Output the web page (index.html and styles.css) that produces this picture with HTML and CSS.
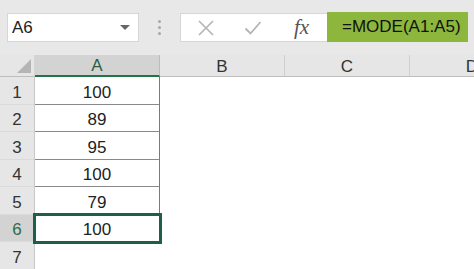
FILE: index.html
```html
<html>
  <head>
    <title>MODE</title>
    <link rel="stylesheet" href="styles.css">
  </head>
  <body>
    <div class="toolbar">
      <div class="namebox">
        <span>A6</span>
        <span class="drop"></span>
      </div>
      <div class="dots"><i></i><i></i><i></i></div>
      <div class="fbar">
        <svg class="ico" width="18" height="18" viewBox="0 0 18 18"><path d="M2 2 L16 16 M16 2 L2 16" stroke="#b4b4b4" stroke-width="1.6" fill="none"/></svg>
        <svg class="ico" width="18" height="18" viewBox="0 0 18 18"><path d="M1.5 9.5 L6.5 14.5 L16.5 3" stroke="#b4b4b4" stroke-width="1.8" fill="none"/></svg>
        <span class="fx">fx</span>
      </div>
      <div class="formula">=MODE(A1:A5)</div>
    </div>

    <div class="sheet">
      <div class="hd corner"><span class="tri"></span></div>
      <div class="hd col sel">A</div>
      <div class="hd col">B</div>
      <div class="hd col">C</div>
      <div class="hd col">D</div>

      <div class="rh">1</div><div class="cell a">100</div><div class="cell"></div><div class="cell"></div><div class="cell"></div>
      <div class="rh">2</div><div class="cell a">89</div><div class="cell"></div><div class="cell"></div><div class="cell"></div>
      <div class="rh">3</div><div class="cell a">95</div><div class="cell"></div><div class="cell"></div><div class="cell"></div>
      <div class="rh">4</div><div class="cell a">100</div><div class="cell"></div><div class="cell"></div><div class="cell"></div>
      <div class="rh">5</div><div class="cell a">79</div><div class="cell"></div><div class="cell"></div><div class="cell"></div>
      <div class="rh sel">6</div><div class="cell a active">100</div><div class="cell"></div><div class="cell"></div><div class="cell"></div>
      <div class="rh">7</div><div class="cell"></div><div class="cell"></div><div class="cell"></div><div class="cell"></div>
    </div>
  </body>
</html>
```

FILE: styles.css
```css
body {
  margin: 0;
  background: #fff;
  font-family: "Liberation Sans", Arial, sans-serif;
  color: #222;
  overflow: hidden;
}

/* formula toolbar */
.toolbar {
  height: 55px;
  background: #e8e8e8;
  display: flex;
  align-items: flex-start;
  padding: 13px 0 0 7px;
  box-sizing: border-box;
}
.namebox {
  width: 132px;
  height: 29px;
  background: #fff;
  border: 1px solid #d6d6d6;
  box-sizing: border-box;
  display: flex;
  align-items: center;
  justify-content: space-between;
  padding: 0 8px 0 4px;
  font-size: 17px;
  color: #222;
}
.drop {
  width: 0;
  height: 0;
  border-left: 5px solid transparent;
  border-right: 5px solid transparent;
  border-top: 5px solid #666;
}
.dots {
  width: 41px;
  height: 29px;
  display: flex;
  flex-direction: column;
  align-items: center;
  justify-content: center;
  gap: 3px;
}
.dots i {
  width: 3px;
  height: 3px;
  border-radius: 50%;
  background: #a8a8a8;
}
.fbar {
  width: 147px;
  height: 29px;
  background: #fff;
  border: 1px solid #d6d6d6;
  border-right: 0;
  box-sizing: border-box;
  display: flex;
  align-items: center;
  padding-left: 16px;
  gap: 29px;
}
.fx {
  font-family: "Liberation Serif", serif;
  font-style: italic;
  font-size: 21px;
  color: #555;
  margin-left: 3px;
}
.formula {
  width: 141px;
  height: 30px;
  margin-top: -1px;
  background: #8cb63c;
  box-sizing: border-box;
  padding-left: 15px;
  display: flex;
  align-items: center;
  font-size: 17px;
  color: #111;
}

/* grid */
.sheet {
  display: grid;
  grid-template-columns: 35px 125px 125px 125px 125px;
  grid-template-rows: 22px repeat(7, 27.5px);
}
.hd {
  background: #e6e6e6;
  border-bottom: 1px solid #bdbdbd;
  display: flex;
  align-items: center;
  justify-content: center;
  padding-top: 2px;
  font-size: 17px;
  color: #333;
  box-sizing: border-box;
}
.corner {
  position: relative;
  border-right: 1px solid #d4d4d4;
}
.tri {
  position: absolute;
  right: 3px;
  bottom: 3px;
  width: 0;
  height: 0;
  border-left: 14px solid transparent;
  border-bottom: 14px solid #b5b5b5;
}
.col {
  border-right: 1px solid #cfcfcf;
}
.col.sel {
  background: #d3d3d3;
  color: #2b5e42;
  border-bottom: 2px solid #217346;
  border-right: 1px solid #bdbdbd;
}
.rh {
  background: #e6e6e6;
  border-right: 1px solid #c8c8c8;
  border-bottom: 1px solid #dadada;
  box-sizing: border-box;
  display: flex;
  align-items: center;
  justify-content: center;
  padding-top: 5px;
  font-size: 17px;
  color: #333;
}
.rh.sel {
  background: #d3d3d3;
  color: #2f6b47;
}
.cell {
  box-sizing: border-box;
  font-size: 17px;
  display: flex;
  align-items: center;
  justify-content: center;
}
.cell.a {
  border-right: 1px solid #7a7a7a;
  border-bottom: 1px solid #8a8a8a;
  padding-top: 5px;
}
.active {
  position: relative;
}
.active::after {
  content: "";
  position: absolute;
  left: -2px;
  top: -2px;
  right: -3px;
  bottom: -3px;
  border: 3px solid #1e5e4d;
}
```
